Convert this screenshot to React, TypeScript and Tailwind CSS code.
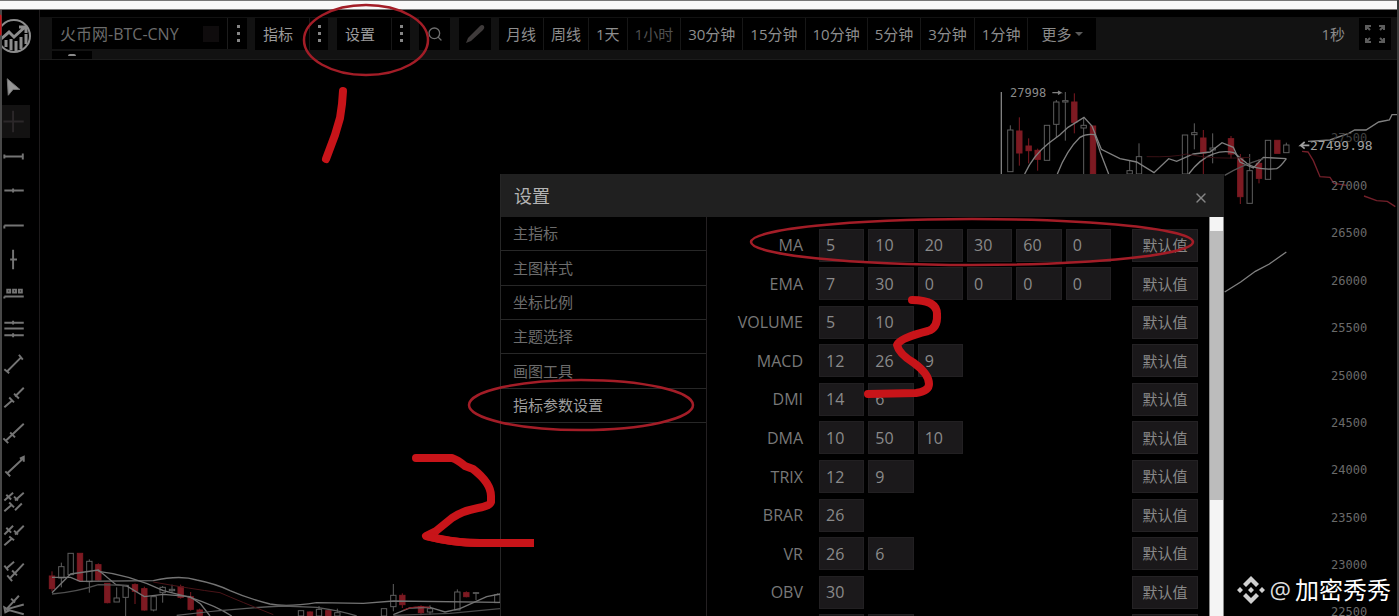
import React from 'react'
import { Search, X } from 'lucide-react'
import clsx from 'clsx'

const periods = ['月线', '周线', '1天', '1小时', '30分钟', '15分钟', '10分钟', '5分钟', '3分钟', '1分钟']

const settingTabs = ['主指标', '主图样式', '坐标比例', '主题选择', '画图工具', '指标参数设置']

const indicatorParams = [
  { name: 'MA', values: [5, 10, 20, 30, 60, 0] },
  { name: 'EMA', values: [7, 30, 0, 0, 0, 0] },
  { name: 'VOLUME', values: [5, 10] },
  { name: 'MACD', values: [12, 26, 9] },
  { name: 'DMI', values: [14, 6] },
  { name: 'DMA', values: [10, 50, 10] },
  { name: 'TRIX', values: [12, 9] },
  { name: 'BRAR', values: [26] },
  { name: 'VR', values: [26, 6] },
  { name: 'OBV', values: [30] },
  { name: '', values: [0, 0] },
]

// price axis, y inside the chart area
const priceTicks = [
  { price: '27500', y: 82 },
  { price: '27000', y: 130 },
  { price: '26500', y: 177 },
  { price: '26000', y: 225 },
  { price: '25500', y: 272 },
  { price: '25000', y: 320 },
  { price: '24500', y: 367 },
  { price: '24000', y: 414 },
  { price: '23500', y: 462 },
  { price: '23000', y: 509 },
  { price: '22500', y: 556 },
]

// drawing tools, 40x34 box each
const tools = [
  { name: '光标', d: 'M7 8L20 19L13 19L8 25Z', solid: true },
  { name: '十字线', d: 'M13 6V28M3 17H24', active: true },
  { name: '线段', d: 'M4 17H23M4 15V19M23 14V20' },
  { name: '直线', d: 'M4 17H24M13 15V19' },
  { name: '射线', d: 'M4 17H24M4 17V20' },
  { name: '垂线', d: 'M13 7V27M10 17H17' },
  { name: '价格线', d: 'M4 19H24M4 19V21M7 12H10V15H7ZM13 12H16V15H13ZM19 12H22V15H19Z' },
  { name: '平行线', d: 'M4 11H24M4 17H24M4 24H24M13 9V13M13 22V26' },
  { name: '趋势线', d: 'M7 25L21 11M4 23L9 27M19 8L23 13' },
  { name: '趋势直线', d: 'M4 27L12 20M9 17L14 22M15 16L24 7M14 13L19 18' },
  { name: '趋势射线', d: 'M6 25L24 8M3 23L8 28M10 17L15 22' },
  { name: '箭头', d: 'M7 24L23 9M5 22L10 27M20 9L24 7L24 12' },
  { name: '平行直线', d: 'M4 16L13 8M6 10L11 15M4 27L12 20M9 18L14 23M15 16L24 8M14 12L18 16M15 26L22 19' },
  { name: '平行射线', d: 'M4 16L13 7M6 9L11 14M4 27L12 20M9 18L14 22M15 16L24 7M14 12L18 16' },
  { name: '平行线段', d: 'M6 15L14 8M4 12L8 17M9 26L24 10M7 22L12 28M12 17L17 22' },
  { name: '扇形线', d: 'M6 22L19 8M11 11L15 15M6 22L24 17M6 22L24 27M4 20L9 23L5 25Z' },
]

// [x, high, open, close, low, isDown]
type Candle = [number, number, number, number, number, boolean]

const rightCandles: Candle[] = [
  [91, 136, 150, 275, 275, false],
  [118, 112, 153, 219, 257, true],
  [146, 175, 198, 212, 250, true],
  [173, 206, 211, 238, 272, true],
  [201, 136, 136, 241, 241, false],
  [229, 60, 66, 133, 172, false],
  [256, 36, 62, 66, 182, false],
  [283, 40, 66, 127, 160, true],
  [311, 112, 136, 144, 282, false],
  [339, 138, 138, 282, 282, true],
  [449, 240, 272, 282, 282, false],
  [477, 190, 230, 282, 282, false],
  [615, 165, 165, 282, 282, false],
  [643, 130, 158, 164, 208, false],
  [670, 150, 174, 219, 282, true],
  [698, 160, 204, 210, 250, false],
  [753, 168, 176, 222, 235, true],
  [781, 222, 236, 350, 372, true],
  [809, 222, 272, 370, 370, false],
  [837, 238, 250, 295, 310, true],
  [864, 181, 181, 298, 298, false],
  [892, 181, 181, 220, 220, true],
  [919, 188, 195, 218, 218, false],
]

const leftCandles: Candle[] = [
  [66, 124, 138, 176, 184, true],
  [94, 98, 110, 144, 172, false],
  [122, 70, 70, 134, 134, false],
  [150, 70, 70, 152, 156, true],
  [178, 88, 94, 155, 188, false],
  [205, 100, 104, 150, 152, true],
  [232, 160, 160, 218, 220, true],
  [260, 172, 204, 216, 216, false],
  [287, 166, 166, 202, 258, false],
  [315, 160, 164, 184, 222, true],
  [343, 170, 176, 240, 242, true],
  [371, 200, 200, 240, 244, false],
  [398, 168, 172, 188, 218, false],
  [426, 164, 178, 182, 188, false],
  [452, 164, 170, 202, 206, true],
  [482, 186, 200, 238, 242, true],
  [509, 236, 240, 256, 258, true],
  [813, 242, 242, 258, 258, false],
  [840, 244, 246, 258, 258, true],
  [867, 228, 238, 258, 258, false],
  [895, 240, 242, 258, 258, true],
  [922, 236, 248, 258, 258, false],
  [1062, 236, 236, 258, 258, false],
  [1090, 162, 196, 230, 244, false],
  [1117, 190, 196, 224, 234, true],
  [1173, 226, 230, 248, 256, true],
  [1200, 226, 236, 246, 254, false],
  [1282, 178, 186, 240, 240, false],
  [1309, 184, 188, 200, 202, true],
  [1338, 186, 188, 190, 210, false],
  [1402, 190, 194, 218, 218, false],
]

function Candles({ data }: { data: Candle[] }) {
  return (
    <g>
      {data.map(([x, high, open, close, low, isDown]) => (
        <g key={x} stroke={isDown ? '#7d1a22' : '#5e5e5e'} strokeWidth="3" fill={isDown ? '#7d1a22' : 'none'}>
          <path d={`M${x} ${high}V${open}M${x} ${close}V${low}`} />
          <rect x={x - 8} y={open} width="16" height={close - open} />
        </g>
      ))}
    </g>
  )
}

function Dots() {
  return (
    <svg className="h-5 w-1" viewBox="0 0 4 20" fill="#858585">
      <rect x="1" y="1" width="3" height="3" />
      <rect x="1" y="8" width="3" height="3" />
      <rect x="1" y="15" width="3" height="3" />
    </svg>
  )
}

function MenuButton({ label }: { label: string }) {
  return (
    <div className="flex h-8 bg-black">
      <button className="w-[54px] text-left pl-2 text-[#9a9a9a]">{label}</button>
      <button aria-label={label + '菜单'} className="flex w-[19px] items-center justify-center border-l border-[#171717]">
        <Dots />
      </button>
    </div>
  )
}

function Toolbar() {
  return (
    <header className="mt-[7px] flex h-[43px] shrink-0 border-b border-[#1c1c1c] bg-[#121212] pl-3 pr-2 pt-px text-[15px] text-[#8a8a8a]">
      <div className="flex w-[195px] flex-col">
        <div className="flex h-8 bg-black">
          <input
            aria-label="交易对"
            defaultValue="火币网-BTC-CNY"
            className="min-w-0 flex-1 bg-transparent pl-2 text-base text-[#6c6c6c] outline-none"
          />
          <span className="mr-2 mt-2 h-4 w-4 bg-[#0f0c0d]" />
          <button aria-label="更多选项" className="flex w-5 items-center justify-center border-l border-[#1c1c1c]">
            <Dots />
          </button>
        </div>
        <div className="mt-0.5 flex h-2 w-10 items-center justify-center bg-black">
          <span className="h-0.5 w-2 rounded-t-full bg-[#8a8a8a]" />
        </div>
      </div>
      <div className="ml-2 flex gap-[9px]">
        <MenuButton label="指标" />
        <MenuButton label="设置" />
        <button aria-label="搜索" className="flex h-8 w-[31px] items-center bg-black pl-2">
          <Search className="size-4 text-[#6e6e6e]" strokeWidth={2} />
        </button>
        <button aria-label="画笔" className="flex h-8 w-8 items-center justify-center bg-black">
          <svg className="size-5" viewBox="0 0 20 20" fill="#3f3b3b">
            <path d="M1 19L3 14L15 2Q17 0 19 2Q20 4 18 6L6 17Z" />
          </svg>
        </button>
      </div>
      <nav className="ml-2 flex h-8 bg-black">
        {periods.map((period) => (
          <button
            key={period}
            className={clsx('whitespace-nowrap border-r border-[#171717] px-[7px]', period === '1小时' ? 'text-[#505050]' : 'text-[#8e8e8e]')}
          >
            {period}
          </button>
        ))}
        <button className="flex w-[68px] items-center justify-center gap-1">
          更多
          <svg className="h-1 w-2" viewBox="0 0 8 4" fill="#5a5a5a">
            <path d="M0 0H8L4 4Z" />
          </svg>
        </button>
      </nav>
      <div className="ml-auto flex h-8 items-center gap-[14px]">
        <span>1秒</span>
        <button aria-label="全屏" className="flex h-8 w-8 items-center justify-center bg-black">
          <svg className="size-5" viewBox="0 0 20 20" fill="none" stroke="#5c5c5c" strokeWidth="2">
            <path d="M1 6V2H6M1 2L5 6M14 2H19V6M19 2L15 6M1 14V18H6M1 18L5 14M14 18H19V14M19 18L15 14" />
          </svg>
        </button>
      </div>
    </header>
  )
}

function ToolRail() {
  return (
    <aside className="w-10 shrink-0 overflow-hidden border-l-2 border-r border-l-[#484848] border-r-[#1e1b1c]">
      <svg className="mt-[7px] h-9 w-8" viewBox="2 0 32 36" fill="none" stroke="#8c8c8c" strokeWidth="2">
        <circle cx="14" cy="19" r="16" />
        <path d="M1 22L9 15L14 20L25 10M19 10H26V16" strokeWidth="3" />
        <path d="M6 23V30M11 22V33M16 24V34M21 20V32M26 17V27" strokeWidth="3" />
      </svg>
      {/* tools */}
      <div className="mt-[17px] grid h-[552px] auto-rows-fr">
        {tools.map((tool) => (
          <button key={tool.name} aria-label={tool.name} className="min-h-0">
            <svg
              className={clsx('h-[33px] w-7', tool.active && 'bg-[#131212]')}
              viewBox="2 0 28 34"
              fill={tool.solid ? '#959595' : 'none'}
              stroke={tool.active ? '#2b2729' : '#747474'}
              strokeWidth={tool.solid ? 1 : 2}
            >
              <path d={tool.d} />
            </svg>
          </button>
        ))}
      </div>
    </aside>
  )
}

function Chart() {
  return (
    <>
      <svg className="absolute bottom-0 left-0 h-[86px] w-[470px]" viewBox="30 0 1410 258" fill="none">
        <Candles data={leftCandles} />
        <g stroke="#747474" strokeWidth="4">
          <path d="M66 188L122 132L205 120L258 164L290 168L343 200L400 193L480 200L512 222L540 258" />
          <path d="M66 192Q140 186 205 164L290 166" stroke="#505050" />
          <path d="M66 142L122 142L150 154L370 152Q450 134 500 150Q560 162 600 182Q650 204 720 222Q770 232 860 218L1000 220L1090 213L1410 217" />
          <path d="M205 124Q300 134 400 182L480 202Q560 228 605 258" />
          <path d="M440 256Q600 236 760 228L860 232Q940 244 980 258" stroke="#5c5c5c" />
          <path d="M1090 254L1140 234L1200 232L1245 246L1290 236L1370 200L1410 192" />
          <path d="M1090 256L1260 250L1410 236" stroke="#4a4a4a" />
        </g>
        <path d="M370 156Q480 176 570 188Q630 214 730 254" stroke="#4a1418" strokeWidth="3" />
        <path d="M1120 240Q1150 226 1200 232" stroke="#8f1a22" strokeWidth="3" />
      </svg>

      <svg className="absolute right-0 top-5 h-[230px] w-[419px]" viewBox="0 0 1257 690" fill="none">
        <Candles data={rightCandles} />
        <g stroke="#808080" strokeWidth="4">
          <path d="M64 36V282M217 38H242L234 33M242 38L234 43" />
          <path d="M134 282Q160 226 206 190L240 164L264 142L312 112L336 138L364 208L420 236L470 246L522 278L566 236L590 244L640 222L690 216L726 188L760 202L780 246L820 264L850 232L919 236" />
          <path d="M232 282Q260 210 300 172Q318 160 344 164L362 220L386 282" />
          <path d="M626 282Q660 236 700 222Q730 210 762 218L800 250Q830 272 890 266Q902 260 919 236" />
          <path d="M734 286Q780 258 850 236" stroke="#555" />
          <path d="M734 636L782 606L826 574L868 552L919 516" />
          <path d="M984 184L1050 180L1106 160L1124 150H1158L1196 126L1228 120L1236 104H1251" />
        </g>
        <path d="M966 214L984 216L1000 242L1020 290L1050 292L1062 310L1100 316M1152 348L1190 362L1222 364L1246 380" stroke="#74202a" strokeWidth="4" />
        <path d="M988 196H962L974 186M962 196L974 206" stroke="#a0a0a0" strokeWidth="5" />
        <path d="M500 230Q580 232 620 222Q700 240 810 232" stroke="#3a1115" strokeWidth="3" />
      </svg>

      <svg className="absolute right-0 top-0 h-full w-[400px] font-['DejaVu_Sans_Mono',monospace] text-[12px]" fill="#6a6a6a">
        {priceTicks.map((tick, index) => (
          <text key={tick.price} x="332" y={tick.y} fill={index === 0 ? '#404040' : undefined}>
            {tick.price}
          </text>
        ))}
        <text x="11" y="37" fill="#8a8a8a">27998</text>
        <text x="311" y="90" fill="#a0a0a0" className="text-[13px]">27499.98</text>
      </svg>
    </>
  )
}

function SettingsDialog() {
  return (
    <section
      role="dialog"
      aria-label="设置"
      className="absolute bottom-0 left-[500px] right-[175px] top-[174px] flex flex-col overflow-hidden border-l border-[#262626] bg-black"
    >
      <div className="flex h-[43px] shrink-0 items-center justify-between bg-[#202020] pl-[13px] pr-[15px]">
        <h2 className="text-lg text-[#b4b4b4]">设置</h2>
        <button aria-label="关闭" className="pt-1 text-[#868686]">
          <X className="size-4" strokeWidth={2} />
        </button>
      </div>

      <div className="flex min-h-0 flex-1">
        <nav className="w-[206px] shrink-0 border-r border-[#242022]">
          <div className="grid h-[206px] auto-rows-fr text-[15px]">
            {settingTabs.map((tab, index) => (
              <button
                key={tab}
                className={clsx(
                  'border-b border-[#272727] pl-3 text-left',
                  index === settingTabs.length - 1 ? 'text-[#9c9c9c]' : 'text-[#6c6c6c]'
                )}
              >
                {tab}
              </button>
            ))}
          </div>
        </nav>

        <div className="min-w-0 flex-1 overflow-hidden pr-[11px] pt-[9px]">
          <div className="grid h-[424px] auto-rows-fr text-base text-[#8a8a8a]">
            {indicatorParams.map((row, index) => (
              <div key={index} className="flex items-center">
                <span className="w-24 shrink-0 text-right text-[#787878]">{row.name}</span>
                <div className="ml-4 grid w-[292px] shrink-0 grid-cols-6 gap-1">
                  {row.values.map((value, i) => (
                    <input
                      key={i}
                      aria-label={`${row.name} ${i + 1}`}
                      defaultValue={value}
                      className="h-[33px] w-full min-w-0 border border-[#222022] bg-[#1b191b] pl-1.5 outline-none"
                    />
                  ))}
                </div>
                <button className="ml-auto h-[33px] w-[66px] shrink-0 border border-[#242224] bg-[#1a181a] text-[15px] text-[#888]">
                  默认值
                </button>
              </div>
            ))}
          </div>
        </div>

        {/* scrollbar */}
        <div className="w-[15px] shrink-0 border-x border-[#8a8a8a] bg-[#f4f4f4] pt-[14px]">
          <div className="h-[269px] bg-[#bcbcbc]" />
        </div>
      </div>
    </section>
  )
}

// hand drawn step marks
function Annotations() {
  return (
    <svg className="pointer-events-none absolute inset-0 h-full w-full" fill="none" strokeLinecap="round" strokeLinejoin="round">
      <g stroke="#a31d27" strokeWidth="2.5">
        <ellipse cx="366" cy="40" rx="62" ry="35" />
        <ellipse cx="581" cy="405" rx="112" ry="25" />
        <ellipse cx="972" cy="242" rx="221" ry="23" />
      </g>
      <g stroke="#c81419" strokeWidth="8">
        <path d="M343 91L342 104L340 118L335 135L326 159" />
        <path d="M416 458H452Q458 460 465 466L473 469Q491 483 491 496V502Q490 506 478 508Q462 511 452 518L436 531L426 536L440 539Q460 543 480 543" />
        <path d="M426 536Q452 543 480 543H534" strokeLinecap="butt" />
        <path d="M912 300Q937 300 937 314Q938 328 928 331Q900 338 897 345Q899 354 914 363Q929 374 929 384Q929 391 916 393L868 394" />
      </g>
      <path d="M0 16V34" stroke="#c81419" strokeWidth="3" />
    </svg>
  )
}

function Watermark() {
  return (
    <div className="absolute bottom-2 right-2 flex items-center text-2xl leading-9 text-white">
      <svg className="mr-1 size-7" viewBox="0 0 28 28" fill="#d0d0d0">
        <path d="M14 0L22 8L19 11L14 6L9 11L6 8ZM14 28L6 20L9 17L14 22L19 17L22 20ZM14 11L17 14L14 17L11 14ZM3 11L6 14L3 17L0 14ZM25 11L28 14L25 17L22 14Z" />
      </svg>
      <span className="mr-1 text-[#dcdcdc]">@</span>
      <span>加密秀秀</span>
    </div>
  )
}

export default function App() {
  return (
    <div className="relative flex h-screen flex-col overflow-hidden bg-black font-['Open_Sans','Noto_Sans_CJK_SC',sans-serif]">
      <div className="h-[10px] shrink-0 border-y border-[#777] bg-[#f8f8f8]" />
      <div className="flex min-h-0 flex-1">
        <ToolRail />
        <div className="flex min-w-0 flex-1 flex-col">
          <Toolbar />
          <main className="relative min-h-0 flex-1 overflow-hidden">
            <Chart />
          </main>
        </div>
      </div>
      {/* window edge */}
      <div className="absolute inset-y-0 right-0 w-0.5 bg-[#3c3c3c]" />
      <SettingsDialog />
      <Annotations />
      <Watermark />
    </div>
  )
}
